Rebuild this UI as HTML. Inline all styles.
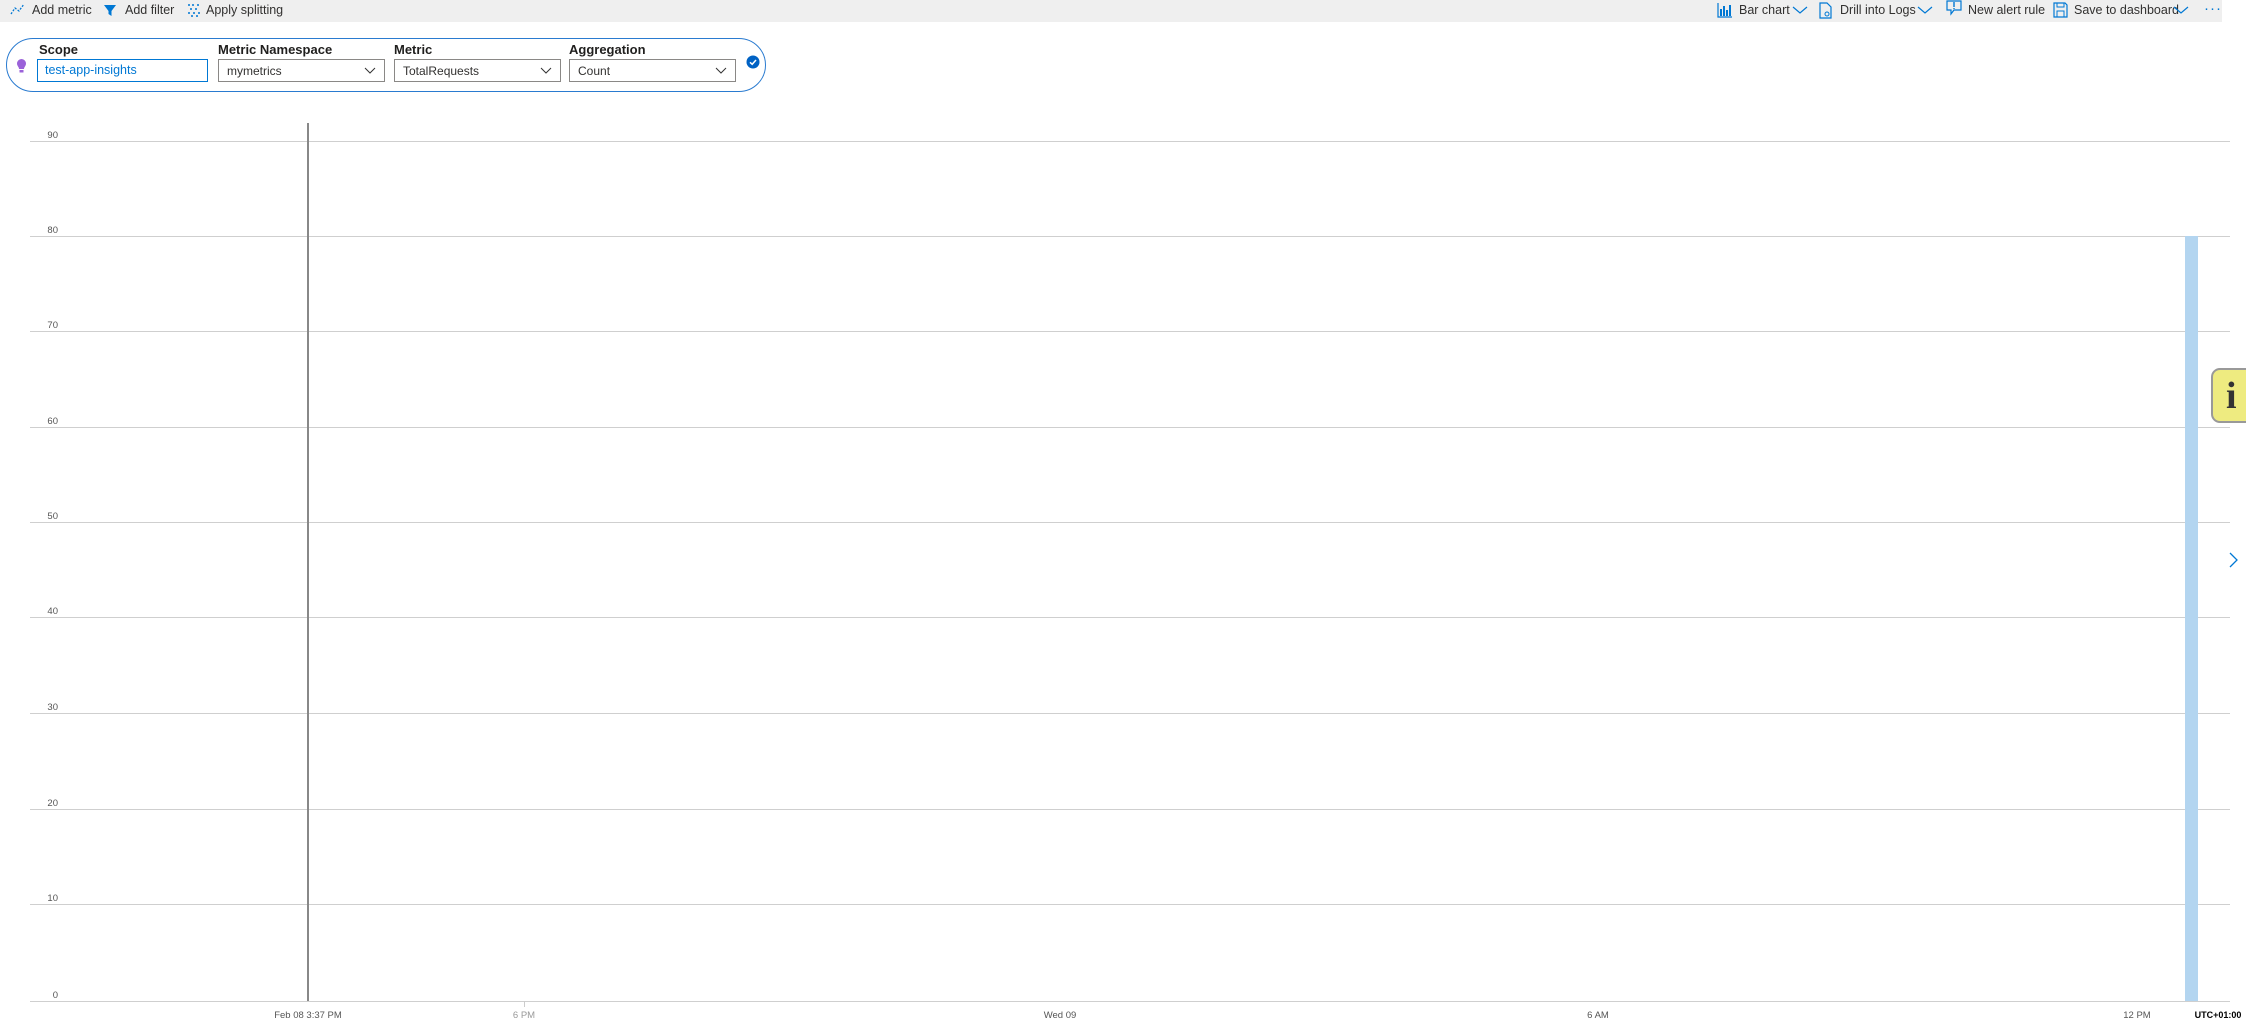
<!DOCTYPE html>
<html><head><meta charset="utf-8"><style>
*{margin:0;padding:0;box-sizing:border-box}
body{width:2246px;height:1024px;background:#fff;font-family:"Liberation Sans",sans-serif;position:relative;overflow:hidden;color:#323130}
.tb{position:absolute;left:0;top:0;width:2222px;height:22px;background:#efefef}
.t{position:absolute;top:3px;font-size:12.5px;color:#323130;white-space:nowrap}
.ic{position:absolute;top:2px}
.pill{position:absolute;left:6px;top:38px;width:760px;height:54px;border:1.5px solid #2a7bd0;border-radius:27px}
.lb{position:absolute;top:42px;font-size:13px;font-weight:bold;color:#201f1e}
.inp{position:absolute;top:59px;height:23px;border:1px solid #8a8886;font-size:12px;padding:4px 8px;color:#323130}
.inp svg{position:absolute;right:8px;top:7px}
.gl{position:absolute;left:30px;width:2200px;height:1px;background:#cfcfcf}
.yl{position:absolute;left:44px;width:14px;text-align:right;font-size:9.5px;color:#555}
.xl{position:absolute;top:1010px;font-size:9.5px;color:#555;white-space:nowrap;transform:translateX(-50%)}
</style></head><body>
<div class="tb"></div>
<svg class="ic" style="left:10px" width="16" height="14"><path d="M1 12 L5 6 L9 9 L14 2" stroke="#0078d4" stroke-width="1.3" fill="none" stroke-dasharray="2 1.5"/></svg>
<div class="t" style="left:32px">Add metric</div>
<svg class="ic" style="left:102px" width="16" height="16"><path d="M2 3 H14 L9.5 9 V14 L6.5 12 V9 Z" fill="#0078d4"/></svg>
<div class="t" style="left:125px">Add filter</div>
<svg class="ic" style="left:186px" width="16" height="16"><g fill="#0078d4"><circle cx="3" cy="3" r="1"/><circle cx="7" cy="3" r="1"/><circle cx="12" cy="3" r="1"/><circle cx="5" cy="7" r="1"/><circle cx="10" cy="7" r="1"/><circle cx="3" cy="11" r="1"/><circle cx="8" cy="11" r="1"/><circle cx="13" cy="11" r="1"/><circle cx="6" cy="14" r="1"/><circle cx="11" cy="14" r="1"/></g></svg>
<div class="t" style="left:206px">Apply splitting</div>
<svg class="ic" style="left:1717px" width="16" height="16"><path d="M1 1V15H15" stroke="#0078d4" fill="none" stroke-width="1.2"/><g fill="#0078d4"><rect x="3" y="7" width="2" height="7"/><rect x="6" y="4" width="2" height="10"/><rect x="9" y="8" width="2" height="6"/><rect x="12" y="3" width="2" height="11"/></g></svg>
<div class="t" style="left:1739px">Bar chart</div>
<svg class="ic" style="left:1792px;top:5px" width="16" height="10"><path d="M1 2 L8 8 L15 2" stroke="#0078d4" fill="none" stroke-width="1.2"/></svg>
<svg class="ic" style="left:1819px" width="14" height="18"><path d="M1 1H8L12 5V16H1Z" stroke="#0078d4" fill="none" stroke-width="1.2"/><circle cx="8" cy="12" r="2" stroke="#0078d4" fill="none"/></svg>
<div class="t" style="left:1840px">Drill into Logs</div>
<svg class="ic" style="left:1917px;top:5px" width="16" height="10"><path d="M1 2 L8 8 L15 2" stroke="#0078d4" fill="none" stroke-width="1.2"/></svg>
<svg class="ic" style="left:1946px;top:0" width="16" height="16"><path d="M1 1H15V10H8L5 14V10H1Z" stroke="#0078d4" fill="none" stroke-width="1.2"/><path d="M8 2V7M8 8V9" stroke="#0078d4" stroke-width="1.4"/></svg>
<div class="t" style="left:1968px">New alert rule</div>
<svg class="ic" style="left:2053px" width="15" height="16"><path d="M1 1H12L14 3V15H1Z" stroke="#0078d4" fill="none" stroke-width="1.2"/><rect x="4" y="1" width="7" height="4" stroke="#0078d4" fill="none"/><rect x="4" y="9" width="7" height="6" stroke="#0078d4" fill="none"/></svg>
<div class="t" style="left:2074px">Save to dashboard</div>
<svg class="ic" style="left:2173px;top:5px" width="16" height="10"><path d="M1 2 L8 8 L15 2" stroke="#0078d4" fill="none" stroke-width="1.2"/></svg>
<div class="t" style="left:2204px;top:0;color:#0078d4;font-size:15px;letter-spacing:1px">···</div>

<div class="pill"></div>
<svg style="position:absolute;left:16px;top:58px" width="11" height="16"><path d="M5.5 1A4.5 4.5 0 0 1 10 5.5C10 8 8 9 8 11H3C3 9 1 8 1 5.5A4.5 4.5 0 0 1 5.5 1Z" fill="#9b62d9"/><rect x="3.5" y="12" width="4" height="2.5" fill="#9b62d9"/></svg>
<div class="lb" style="left:39px">Scope</div>
<div class="lb" style="left:218px">Metric Namespace</div>
<div class="lb" style="left:394px">Metric</div>
<div class="lb" style="left:569px">Aggregation</div>
<div class="inp" style="left:37px;width:171px;border:1.5px solid #0078d4;color:#0078d4;font-size:12.5px;padding:3px 7px">test-app-insights</div>
<div class="inp" style="left:218px;width:167px">mymetrics<svg width="12" height="8"><path d="M1 1L6 6L11 1" stroke="#333" fill="none"/></svg></div>
<div class="inp" style="left:394px;width:167px">TotalRequests<svg width="12" height="8"><path d="M1 1L6 6L11 1" stroke="#333" fill="none"/></svg></div>
<div class="inp" style="left:569px;width:167px">Count<svg width="12" height="8"><path d="M1 1L6 6L11 1" stroke="#333" fill="none"/></svg></div>
<svg style="position:absolute;left:746px;top:55px" width="14" height="14"><circle cx="7" cy="7" r="6.5" fill="#0062c4"/><path d="M4 7.3L6.2 9.3L10 5" stroke="#fff" stroke-width="1.5" fill="none"/></svg>

<div class="gl" style="top:141px"></div><div class="yl" style="top:130px">90</div>
<div class="gl" style="top:236px"></div><div class="yl" style="top:225px">80</div>
<div class="gl" style="top:331px"></div><div class="yl" style="top:320px">70</div>
<div class="gl" style="top:427px"></div><div class="yl" style="top:416px">60</div>
<div class="gl" style="top:522px"></div><div class="yl" style="top:511px">50</div>
<div class="gl" style="top:617px"></div><div class="yl" style="top:606px">40</div>
<div class="gl" style="top:713px"></div><div class="yl" style="top:702px">30</div>
<div class="gl" style="top:809px"></div><div class="yl" style="top:798px">20</div>
<div class="gl" style="top:904px"></div><div class="yl" style="top:893px">10</div>
<div class="gl" style="top:1001px"></div><div class="yl" style="top:990px">0</div>
<div style="position:absolute;left:307px;top:123px;width:1.5px;height:878px;background:#888"></div>
<div style="position:absolute;left:2185px;top:236px;width:13px;height:765px;background:#b3d5f0"></div>
<div style="position:absolute;left:524px;top:1001px;width:1px;height:6px;background:#ccc"></div>
<div class="xl" style="left:308px">Feb 08 3:37 PM</div>
<div class="xl" style="left:524px;color:#999">6 PM</div>
<div class="xl" style="left:1060px">Wed 09</div>
<div class="xl" style="left:1598px">6 AM</div>
<div class="xl" style="left:2137px">12 PM</div>
<div class="xl" style="left:2218px;color:#000;font-weight:bold;font-size:9px">UTC+01:00</div>
<div style="position:absolute;left:2211px;top:368px;width:45px;height:55px;background:#eeeb80;border:2px solid #999;border-radius:9px"></div>
<div style="position:absolute;left:2226px;top:374px;font-family:'Liberation Serif',serif;font-weight:bold;font-size:38px;color:#333">i</div>
<svg style="position:absolute;left:2229px;top:552px" width="10" height="16"><path d="M1 1L8 8L1 15" stroke="#0078d4" fill="none" stroke-width="1.3"/></svg>
</body></html>
